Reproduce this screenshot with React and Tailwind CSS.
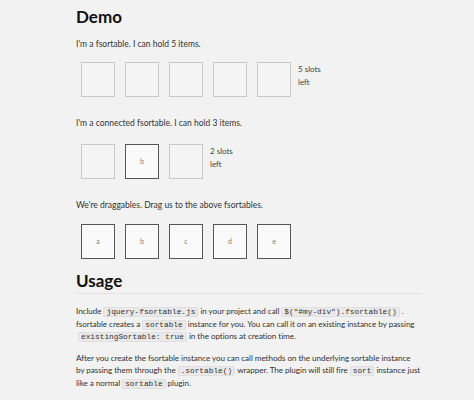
const slots5 = ["", "", "", "", ""];
const slots3 = ["", "b", ""];
const drags = ["a", "b", "c", "d", "e"];

function Box({ label, filled }) {
  return (
    <div
      className={
        "w-[34px] h-[35px] flex items-center justify-center text-[7px] text-[#808080] " +
        (filled ? "border border-[#555] bg-[#fafafa]" : "border border-[#c8c8c8] bg-[#f4f4f4]")
      }
    >
      {label}
    </div>
  );
}

function Code({ children }) {
  return (
    <code className="mx-[2px] px-[2px] py-0 leading-[10px] bg-[#e9e9e9] border border-[#e0e0e0] rounded-[2px] text-[7.8px] tracking-normal text-[#333] font-['Liberation_Mono',monospace]">
      {children}
    </code>
  );
}

export default function App() {
  return (
    <div className="w-[474px] h-[400px] overflow-hidden bg-[#f2f2f2] text-[#333] font-['Lato',sans-serif]">
      <div className="w-[370px] ml-[76px] pt-[6px]">
        <h1 className="text-[17px] font-bold text-[#111] leading-[22px]">Demo</h1>
        <p className="text-[8.5px] leading-[13px] mt-[10px]">I'm a fsortable. I can hold 5 items.</p>
        <div className="flex gap-[10px] ml-[5px] mt-[11px]">
          {slots5.map((s, i) => (
            <Box key={i} label={s} />
          ))}
          <div className="text-[8px] leading-[13px] text-[#444] -ml-[3px] mt-[1px]">
            5 slots
            <br />
            left
          </div>
        </div>
        <p className="text-[8.5px] leading-[13px] mt-[20px]">I'm a connected fsortable. I can hold 3 items.</p>
        <div className="flex gap-[10px] ml-[5px] mt-[14px]">
          {slots3.map((s, i) => (
            <Box key={i} label={s} filled={s !== ""} />
          ))}
          <div className="text-[8px] leading-[13px] text-[#444] -ml-[3px] mt-[1px]">
            2 slots
            <br />
            left
          </div>
        </div>
        <p className="text-[8.5px] leading-[13px] mt-[20px]">We're draggables. Drag us to the above fsortables.</p>
        <div className="flex gap-[10px] ml-[5px] mt-[12px]">
          {drags.map((s) => (
            <Box key={s} label={s} filled />
          ))}
        </div>
        <h2 className="w-[347px] text-[17px] font-bold text-[#111] leading-[22px] mt-[11px] pb-[1px] border-b border-[#e2e2e2]">
          Usage
        </h2>
        <p className="text-[8.1px] leading-[12.5px] mt-[11px] tracking-[-0.05px] whitespace-nowrap">
          Include<Code>jquery-fsortable.js</Code>in your project and call<Code>$("#my-div").fsortable()</Code>.
          <br />
          fsortable creates a<Code>sortable</Code>instance for you. You can call it on an existing instance by passing
          <br />
          <Code>existingSortable: true</Code>in the options at creation time.
        </p>
        <p className="text-[8.1px] leading-[12.5px] mt-[9px] tracking-[-0.05px] whitespace-nowrap">
          After you create the fsortable instance you can call methods on the underlying sortable instance
          <br />
          by passing them through the<Code>.sortable()</Code>wrapper. The plugin will still fire<Code>sort</Code>instance
          just
          <br />
          like a normal<Code>sortable</Code>plugin.
        </p>
      </div>
    </div>
  );
}
